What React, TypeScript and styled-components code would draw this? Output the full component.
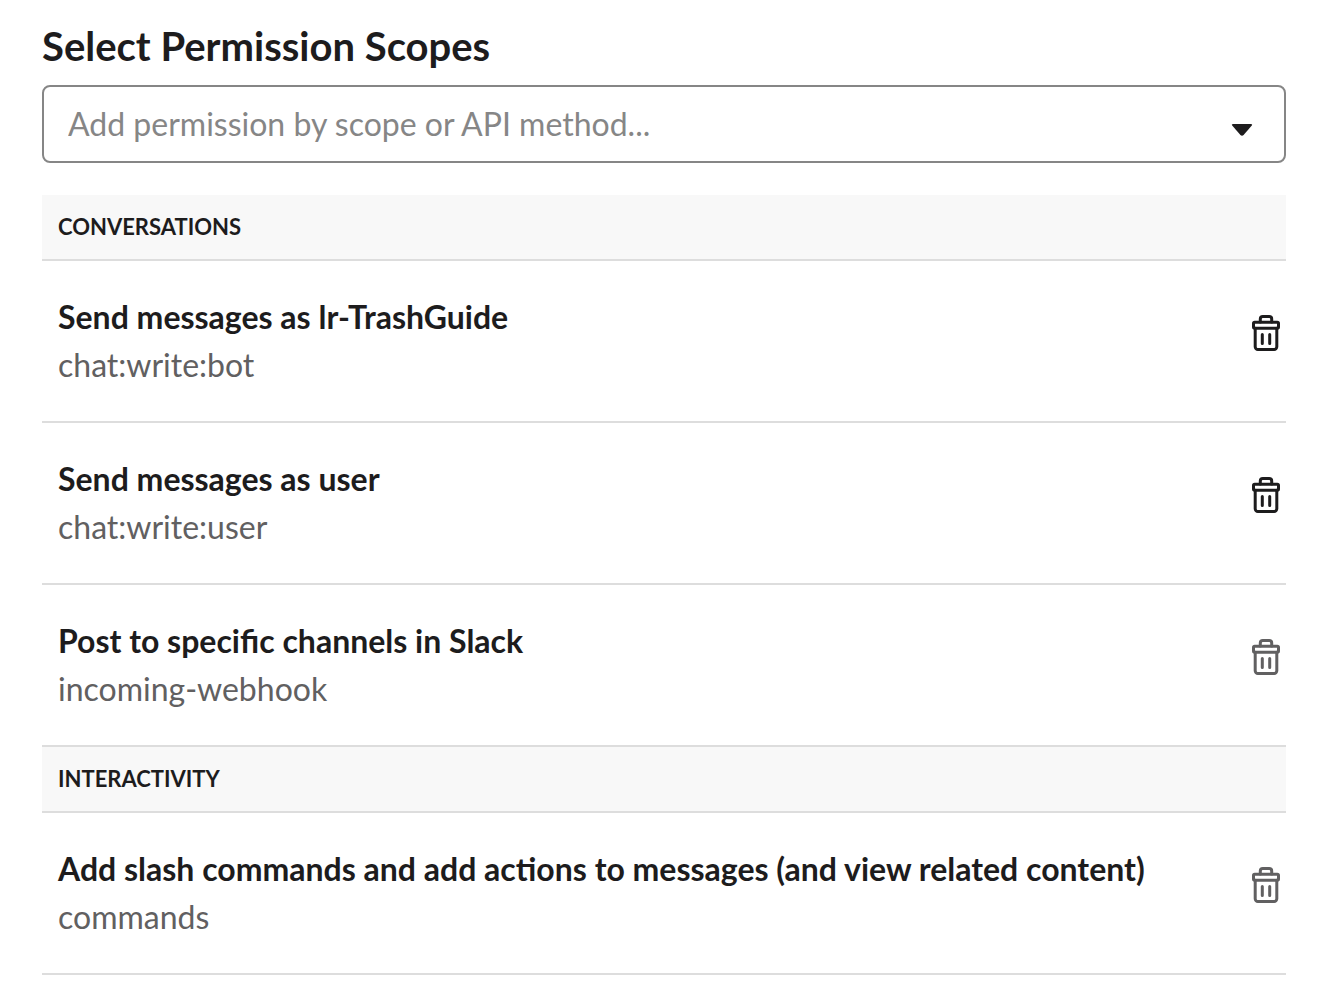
import React from "react";
import styled, { createGlobalStyle } from "styled-components";

const GlobalStyle = createGlobalStyle`
  * { box-sizing: border-box; }
  body {
    margin: 0;
    background: #fff;
    color: #1d1c1d;
    font-family: Lato, "Liberation Sans", sans-serif;
  }
`;

const Page = styled.main`
  padding: 21px 56px 32px 42px;
`;

const Title = styled.label`
  display: block;
  margin-bottom: 14px;
  font-size: 40px;
  line-height: 50px;
  font-weight: 700;
`;

const SelectBox = styled.div`
  display: grid;
  align-items: center;
  height: 78px;
  margin-bottom: 32px;
  border: 2px solid #868686;
  border-radius: 8px;
  & > * { grid-area: 1 / 1; }
`;

const ScopeSelect = styled.select`
  appearance: none;
  width: 100%;
  height: 74px;
  padding: 0 72px 2px 24px;
  border: 0;
  border-radius: 6px;
  background: transparent;
  color: #868686;
  font: inherit;
  font-size: 32px;
`;

const Caret = styled.svg`
  justify-self: end;
  width: 22px;
  height: 14px;
  margin: 12px 31px 0 0;
  pointer-events: none;
`;

const GroupHeading = styled.h2`
  margin: 0;
  padding: 16px;
  border-bottom: 2px solid #dddddd;
  background: #f8f8f8;
  font-size: 22px;
  line-height: 32px;
  font-weight: 700;
`;

const ScopeList = styled.ul`
  margin: 0;
  padding: 0;
  list-style: none;
`;

const ScopeRow = styled.li`
  display: flex;
  align-items: flex-start;
  justify-content: space-between;
  padding: 32px 4px 32px 16px;
  border-bottom: 2px solid #dddddd;
`;

const ScopeName = styled.h3`
  margin: 0;
  font-size: 32px;
  line-height: 48px;
  font-weight: 700;
`;

const ScopeCode = styled.p`
  margin: 0;
  color: #616061;
  font-size: 32px;
  line-height: 48px;
`;

const DeleteButton = styled.button<{ $muted?: boolean }>`
  display: flex;
  margin-top: 20px;
  padding: 0;
  border: 0;
  background: none;
  color: ${(p) => (p.$muted ? "#616061" : "#1d1c1d")};
  cursor: pointer;
`;

const TrashIcon = () => (
  <svg width="32" height="40" viewBox="0 0 32 40" fill="none" stroke="currentColor" strokeWidth="3" strokeLinecap="round" strokeLinejoin="round" aria-hidden="true">
    <path d="M10.3 9V6a2.5 2.5 0 0 1 2.5-2.5h6.4A2.5 2.5 0 0 1 21.7 6V9" />
    <rect x="3.5" y="9.2" width="25" height="6" rx="1.2" />
    <path d="M5.2 15.2v18.6a2.7 2.7 0 0 0 2.7 2.7h16.2a2.7 2.7 0 0 0 2.7-2.7V15.2" />
    <path d="M12.3 21.4v9.2M19.7 21.4v9.2" />
  </svg>
);

interface Scope {
  name: string;
  code: string;
  muted?: boolean;
}

const groups: { title: string; scopes: Scope[] }[] = [
  {
    title: "CONVERSATIONS",
    scopes: [
      { name: "Send messages as lr-TrashGuide", code: "chat:write:bot" },
      { name: "Send messages as user", code: "chat:write:user" },
      { name: "Post to specific channels in Slack", code: "incoming-webhook", muted: true },
    ],
  },
  {
    title: "INTERACTIVITY",
    scopes: [
      { name: "Add slash commands and add actions to messages (and view related content)", code: "commands", muted: true },
    ],
  },
];

export default function App() {
  return (
    <Page>
      <GlobalStyle />
      <Title htmlFor="scope">Select Permission Scopes</Title>
      <SelectBox>
        <ScopeSelect id="scope" defaultValue="">
          <option value="">Add permission by scope or API method...</option>
        </ScopeSelect>
        <Caret viewBox="0 0 22 14" aria-hidden="true">
          <path d="M2 1h18q2 0 .6 1.8l-8 9.2q-1.6 1.6-3.2 0l-8-9.2Q0 1 2 1Z" fill="#1d1c1d" />
        </Caret>
      </SelectBox>
      {groups.map((group) => (
        <section key={group.title}>
          <GroupHeading>{group.title}</GroupHeading>
          <ScopeList>
            {group.scopes.map((scope) => (
              <ScopeRow key={scope.code}>
                <div>
                  <ScopeName>{scope.name}</ScopeName>
                  <ScopeCode>{scope.code}</ScopeCode>
                </div>
                <DeleteButton type="button" $muted={scope.muted} aria-label={`Remove ${scope.code}`}>
                  <TrashIcon />
                </DeleteButton>
              </ScopeRow>
            ))}
          </ScopeList>
        </section>
      ))}
    </Page>
  );
}
